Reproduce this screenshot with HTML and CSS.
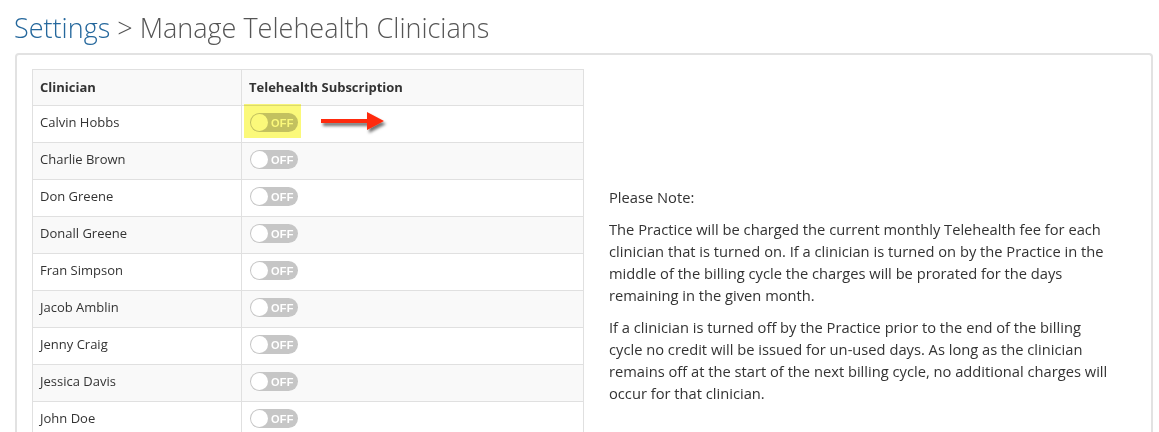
FILE: index.html
```html
<!DOCTYPE html>
<html>
<head>
<meta charset="utf-8">
<link rel="stylesheet" href="styles.css">
</head>
<body>
<h1 class="title"><span class="crumb">Settings</span> &gt; Manage Telehealth Clinicians</h1>
<div class="panel">
  <table class="grid">
    <tr class="shade"><th class="c1">Clinician</th><th class="c2">Telehealth Subscription</th></tr>
    <tr><td>Calvin Hobbs</td><td class="tcell"><span class="toggle"><span class="knob"></span><span class="lbl">OFF</span></span><span class="hl"></span>
      <svg class="arrow" width="80" height="30" viewBox="0 0 80 30"><defs><filter id="sh" x="-20%" y="-40%" width="150%" height="190%"><feDropShadow dx="2" dy="3" stdDeviation="1.6" flood-color="#000" flood-opacity="0.55"/></filter></defs><path d="M2 9 H48 V2 L65 11 L48 20 V13 H2 Z" fill="#ff2a0a" filter="url(#sh)"/></svg></td></tr>
    <tr class="shade"><td>Charlie Brown</td><td class="tcell"><span class="toggle"><span class="knob"></span><span class="lbl">OFF</span></span></td></tr>
    <tr><td>Don Greene</td><td class="tcell"><span class="toggle"><span class="knob"></span><span class="lbl">OFF</span></span></td></tr>
    <tr class="shade"><td>Donall Greene</td><td class="tcell"><span class="toggle"><span class="knob"></span><span class="lbl">OFF</span></span></td></tr>
    <tr><td>Fran Simpson</td><td class="tcell"><span class="toggle"><span class="knob"></span><span class="lbl">OFF</span></span></td></tr>
    <tr class="shade"><td>Jacob Amblin</td><td class="tcell"><span class="toggle"><span class="knob"></span><span class="lbl">OFF</span></span></td></tr>
    <tr><td>Jenny Craig</td><td class="tcell"><span class="toggle"><span class="knob"></span><span class="lbl">OFF</span></span></td></tr>
    <tr class="shade"><td>Jessica Davis</td><td class="tcell"><span class="toggle"><span class="knob"></span><span class="lbl">OFF</span></span></td></tr>
    <tr><td>John Doe</td><td class="tcell"><span class="toggle"><span class="knob"></span><span class="lbl">OFF</span></span></td></tr>
  </table>
  <div class="note">
    <p>Please Note:</p>
    <p>The Practice will be charged the current monthly Telehealth fee for each clinician that is turned on. If a clinician is turned on by the Practice in the middle of the billing cycle the charges will be prorated for the days remaining in the given month.</p>
    <p>If a clinician is turned off by the Practice prior to the end of the billing cycle no credit will be issued for un-used days. As long as the clinician remains off at the start of the next billing cycle, no additional charges will occur for that clinician.</p>
  </div>
</div>
</body>
</html>
```

FILE: styles.css
```css
html, body {
  margin: 0;
  padding: 0;
  background: #fff;
  overflow: hidden;
}
body {
  font-family: "Open Sans", "Liberation Sans", sans-serif;
  font-size: 14px;
  color: #333;
  padding: 0 6px 0 14px;
}
.title {
  margin: 11px 0 8px 0;
  font-size: 27px;
  line-height: 34px;
  font-weight: 300;
  color: #555;
}
.crumb {
  color: #24679c;
}
.panel {
  margin-left: 1px;
  border: 2px solid #e2e2e2;
  border-bottom: none;
  border-radius: 4px 4px 0 0;
  padding: 14px 16px 0 15px;
  display: flex;
  align-items: flex-start;
  gap: 25px;
  height: 400px;
}
.grid {
  border-collapse: collapse;
  width: 552px;
  flex: none;
  font-size: 13px;
}
.grid th, .grid td {
  border: 1px solid #e0e0e0;
  padding: 6px 7px 10px 7px;
  line-height: 20px;
  height: 20px;
  text-align: left;
  vertical-align: middle;
}
.grid th {
  font-weight: 700;
  padding: 7px 7px 8px 7px;
}
.c1 { width: 194px; }
.shade { background: #f9f9f9; }
.grid .tcell {
  position: relative;
  padding: 7px 8px 10px 8px;
  height: 19px;
}
.toggle {
  display: flex;
  align-items: center;
  width: 48px;
  height: 19px;
  border-radius: 10px;
  background: #c6c6c6;
}
.knob {
  width: 17px;
  height: 17px;
  border-radius: 50%;
  background: #fff;
  margin-left: 1px;
  flex: none;
}
.lbl {
  font-family: "Liberation Sans", Arial, sans-serif;
  font-size: 11px;
  font-weight: 700;
  color: #fff;
  margin-left: 3px;
  letter-spacing: 0.2px;
  line-height: 19px;
  position: relative;
  top: 1px;
}
.hl {
  position: absolute;
  left: 2px;
  top: -2px;
  width: 57px;
  height: 34px;
  background: #fbf97a;
  mix-blend-mode: multiply;
}
.arrow {
  position: absolute;
  left: 77px;
  top: 4px;
}
.note {
  padding-top: 117px;
  width: 505px;
  font-size: 14.7px;
}
.note p {
  margin: 0 0 10px 0;
  line-height: 22px;
}
```
